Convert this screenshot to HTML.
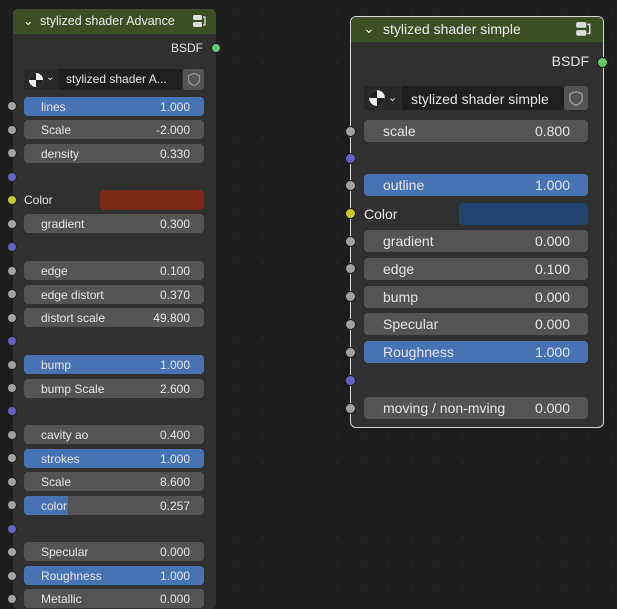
<!DOCTYPE html>
<html><head><meta charset="utf-8"><style>
*{margin:0;padding:0;box-sizing:border-box}
body{width:617px;height:600px;overflow:hidden;background:#1d1d1d;font-family:"Liberation Sans","DejaVu Sans",sans-serif;color:#e6e6e6;position:relative;
background-image:radial-gradient(circle,#262626 1px,transparent 1.3px);background-size:25px 25px}
.node{position:absolute;background:#303030;border-radius:5px}
.hd{position:absolute;left:0;right:0;top:0;background:#3a4f24;border-radius:5px 5px 0 0;color:#eee}
.s{position:absolute;background:#545454;border-radius:4px;overflow:hidden}
.s.b{background:#4772b3}
.s .f{position:absolute;left:0;top:0;bottom:0;background:#4772b3}
.s span{position:absolute;top:0;bottom:0;display:flex;align-items:center}
.k{position:absolute;border-radius:50%;background:#a1a1a1;border:1px solid #222}
.k.p{background:#6363c7}.k.y{background:#c7c729}.k.g{background:#63c763}
.t{position:absolute}
.L .s{left:11px;width:180px;height:19px;font-size:12px}
.L .s span.l{left:17px}.L .s span.v{right:14px}
.L .k{left:-6px;width:10px;height:10px}
.R .s{left:13px;width:224px;height:22px;font-size:14px}
.R .s span.l{left:19px}.R .s span.v{right:18px}
.R .k{left:-6px;width:11px;height:11px}
</style></head><body>

<div class="node L" style="left:13px;top:9px;width:203px;height:600px">
 <div class="hd" style="height:25px;font-size:12.5px"><span class="t" style="left:10px;top:4px">&#8964;</span><span class="t" style="left:27px;top:5px">stylized shader Advance</span>
 <svg class="t" style="left:179px;top:5px" width="15" height="15" viewBox="0 0 15 15"><rect x="1" y="1" width="9" height="5" rx="1.5" fill="#ddd"/><rect x="1" y="8" width="9" height="5" rx="1.5" fill="#ddd"/><path d="M11 3h2v8h-2" stroke="#ddd" fill="none" stroke-width="1.3"/></svg></div>
 <span class="t" style="right:13px;top:32px;font-size:12px">BSDF</span>
 <div class="k g" style="left:198px;top:34px"></div>
 <div class="t" style="left:11px;top:60px;width:158px;height:21px;background:#1e1e1e;border-radius:3px"></div>
 <div class="t" style="left:11px;top:60px;width:35px;height:21px;background:#282828;border-radius:3px 0 0 3px"></div>
 <svg class="t" style="left:15px;top:63px" width="16" height="16" viewBox="0 0 16 16"><circle cx="8" cy="8" r="7" fill="#eee"/><path d="M8 1a7 7 0 0 0-7 7h7zM8 8h7a7 7 0 0 1-7 7z" fill="#222"/></svg>
 <span class="t" style="left:33px;top:63px;font-size:10px">&#8964;</span>
 <span class="t" style="left:53px;top:63px;font-size:12px">stylized shader A...</span>
 <div class="t" style="left:170px;top:60px;width:21px;height:21px;background:#545454;border-radius:3px"></div>
 <svg class="t" style="left:174px;top:63px" width="14" height="15" viewBox="0 0 14 15"><path d="M7 1.5L12.5 3.5V7.5C12.5 10.5 10 12.5 7 13.5C4 12.5 1.5 10.5 1.5 7.5V3.5Z" fill="none" stroke="#999" stroke-width="1.2"/></svg>

 <div class="s b" style="top:88px"><span class="l">lines</span><span class="v">1.000</span></div><div class="k" style="top:92px"></div>
 <div class="s" style="top:111px"><span class="l">Scale</span><span class="v">-2.000</span></div><div class="k" style="top:116px"></div>
 <div class="s" style="top:135px"><span class="l">density</span><span class="v">0.330</span></div><div class="k" style="top:139px"></div>
 <div class="k p" style="top:163px"></div>
 <div class="k y" style="top:186px"></div><span class="t" style="left:11px;top:184px;font-size:12px">Color</span>
 <div class="t" style="left:87px;top:181px;width:104px;height:20px;background:#7a2a16;border-radius:4px"></div>
 <div class="s" style="top:205px"><span class="l">gradient</span><span class="v">0.300</span></div><div class="k" style="top:210px"></div>
 <div class="k p" style="top:233px"></div>
 <div class="s" style="top:252px"><span class="l">edge</span><span class="v">0.100</span></div><div class="k" style="top:257px"></div>
 <div class="s" style="top:276px"><span class="l">edge distort</span><span class="v">0.370</span></div><div class="k" style="top:280px"></div>
 <div class="s" style="top:299px"><span class="l">distort scale</span><span class="v">49.800</span></div><div class="k" style="top:304px"></div>
 <div class="k p" style="top:327px"></div>
 <div class="s b" style="top:346px"><span class="l">bump</span><span class="v">1.000</span></div><div class="k" style="top:351px"></div>
 <div class="s" style="top:370px"><span class="l">bump Scale</span><span class="v">2.600</span></div><div class="k" style="top:374px"></div>
 <div class="k p" style="top:397px"></div>
 <div class="s" style="top:416px"><span class="l">cavity ao</span><span class="v">0.400</span></div><div class="k" style="top:421px"></div>
 <div class="s b" style="top:440px"><span class="l">strokes</span><span class="v">1.000</span></div><div class="k" style="top:444px"></div>
 <div class="s" style="top:463px"><span class="l">Scale</span><span class="v">8.600</span></div><div class="k" style="top:468px"></div>
 <div class="s" style="top:487px"><div class="f" style="width:44px"></div><span class="l">color</span><span class="v">0.257</span></div><div class="k" style="top:491px"></div>
 <div class="k p" style="top:515px"></div>
 <div class="s" style="top:533px"><span class="l">Specular</span><span class="v">0.000</span></div><div class="k" style="top:538px"></div>
 <div class="s b" style="top:557px"><span class="l">Roughness</span><span class="v">1.000</span></div><div class="k" style="top:562px"></div>
 <div class="s" style="top:580px"><span class="l">Metallic</span><span class="v">0.000</span></div><div class="k" style="top:585px"></div>
</div>

<div class="node R" style="left:350px;top:16px;width:254px;height:412px;border:1.5px solid #d8d8d8;border-radius:6px">
 <div class="hd" style="height:25px;font-size:14px"><span class="t" style="left:12px;top:3px">&#8964;</span><span class="t" style="left:32px;top:4px">stylized shader simple</span>
 <svg class="t" style="left:224px;top:4px" width="17" height="17" viewBox="0 0 15 15"><rect x="1" y="1" width="9" height="5" rx="1.5" fill="#ddd"/><rect x="1" y="8" width="9" height="5" rx="1.5" fill="#ddd"/><path d="M11 3h2v8h-2" stroke="#ddd" fill="none" stroke-width="1.3"/></svg></div>
 <span class="t" style="right:14px;top:36px;font-size:14px">BSDF</span>
 <div class="k g" style="left:246px;top:40px;width:11px;height:11px"></div>
 <div class="t" style="left:13px;top:69px;width:200px;height:24px;background:#1e1e1e;border-radius:3px"></div>
 <div class="t" style="left:13px;top:69px;width:38px;height:24px;background:#282828;border-radius:3px 0 0 3px"></div>
 <svg class="t" style="left:17px;top:72px" width="18" height="18" viewBox="0 0 16 16"><circle cx="8" cy="8" r="7" fill="#eee"/><path d="M8 1a7 7 0 0 0-7 7h7zM8 8h7a7 7 0 0 1-7 7z" fill="#222"/></svg>
 <span class="t" style="left:37px;top:74px;font-size:11px">&#8964;</span>
 <span class="t" style="left:60px;top:74px;font-size:14px">stylized shader simple</span>
 <div class="t" style="left:213px;top:69px;width:24px;height:24px;background:#545454;border-radius:3px"></div>
 <svg class="t" style="left:217px;top:73px" width="16" height="17" viewBox="0 0 14 15"><path d="M7 1.5L12.5 3.5V7.5C12.5 10.5 10 12.5 7 13.5C4 12.5 1.5 10.5 1.5 7.5V3.5Z" fill="none" stroke="#999" stroke-width="1.2"/></svg>

 <div class="s" style="top:103px"><span class="l">scale</span><span class="v">0.800</span></div><div class="k" style="top:109px"></div>
 <div class="k p" style="top:136px"></div>
 <div class="s b" style="top:157px"><span class="l">outline</span><span class="v">1.000</span></div><div class="k" style="top:163px"></div>
 <div class="k y" style="top:191px"></div><span class="t" style="left:13px;top:189px;font-size:14px">Color</span>
 <div class="t" style="left:108px;top:186px;width:129px;height:22px;background:#1f4470;border-radius:4px"></div>
 <div class="s" style="top:213px"><span class="l">gradient</span><span class="v">0.000</span></div><div class="k" style="top:219px"></div>
 <div class="s" style="top:241px"><span class="l">edge</span><span class="v">0.100</span></div><div class="k" style="top:246px"></div>
 <div class="s" style="top:269px"><span class="l">bump</span><span class="v">0.000</span></div><div class="k" style="top:274px"></div>
 <div class="s" style="top:296px"><span class="l">Specular</span><span class="v">0.000</span></div><div class="k" style="top:302px"></div>
 <div class="s b" style="top:324px"><span class="l">Roughness</span><span class="v">1.000</span></div><div class="k" style="top:330px"></div>
 <div class="k p" style="top:358px"></div>
 <div class="s" style="top:380px"><span class="l">moving / non-mving</span><span class="v">0.000</span></div><div class="k" style="top:386px"></div>
</div>
</body></html>
